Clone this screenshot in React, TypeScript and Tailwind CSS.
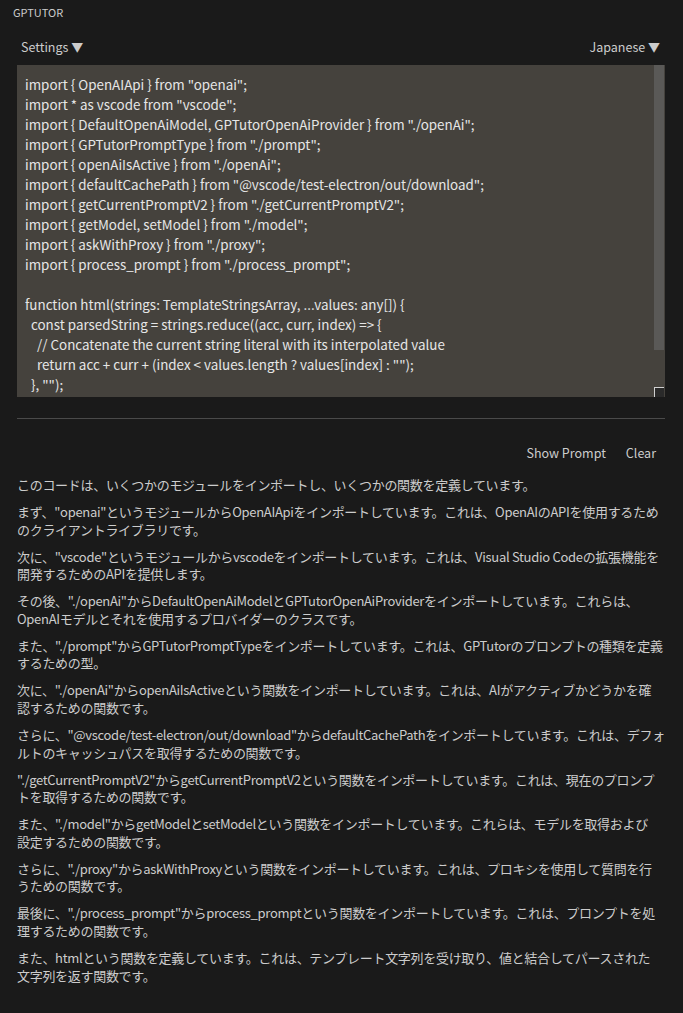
import React from "react";

const CODE = `import { OpenAIApi } from "openai";
import * as vscode from "vscode";
import { DefaultOpenAiModel, GPTutorOpenAiProvider } from "./openAi";
import { GPTutorPromptType } from "./prompt";
import { openAiIsActive } from "./openAi";
import { defaultCachePath } from "@vscode/test-electron/out/download";
import { getCurrentPromptV2 } from "./getCurrentPromptV2";
import { getModel, setModel } from "./model";
import { askWithProxy } from "./proxy";
import { process_prompt } from "./process_prompt";

function html(strings: TemplateStringsArray, ...values: any[]) {
  const parsedString = strings.reduce((acc, curr, index) => {
    // Concatenate the current string literal with its interpolated value
    return acc + curr + (index < values.length ? values[index] : "");
  }, "");`;

// 改行位置はパネル幅に合わせて固定
const PARAGRAPHS: string[][] = [
  ["このコードは、いくつかのモジュールをインポートし、いくつかの関数を定義しています。"],
  [
    "まず、\"openai\"というモジュールからOpenAIApiをインポートしています。これは、OpenAIのAPIを使用するため",
    "のクライアントライブラリです。",
  ],
  [
    "次に、\"vscode\"というモジュールからvscodeをインポートしています。これは、Visual Studio Codeの拡張機能を",
    "開発するためのAPIを提供します。",
  ],
  [
    "その後、\"./openAi\"からDefaultOpenAiModelとGPTutorOpenAiProviderをインポートしています。これらは、",
    "OpenAIモデルとそれを使用するプロバイダーのクラスです。",
  ],
  [
    "また、\"./prompt\"からGPTutorPromptTypeをインポートしています。これは、GPTutorのプロンプトの種類を定義",
    "するための型。",
  ],
  [
    "次に、\"./openAi\"からopenAiIsActiveという関数をインポートしています。これは、AIがアクティブかどうかを確",
    "認するための関数です。",
  ],
  [
    "さらに、\"@vscode/test-electron/out/download\"からdefaultCachePathをインポートしています。これは、デフォ",
    "ルトのキャッシュパスを取得するための関数です。",
  ],
  [
    "\"./getCurrentPromptV2\"からgetCurrentPromptV2という関数をインポートしています。これは、現在のプロンプ",
    "トを取得するための関数です。",
  ],
  [
    "また、\"./model\"からgetModelとsetModelという関数をインポートしています。これらは、モデルを取得および",
    "設定するための関数です。",
  ],
  [
    "さらに、\"./proxy\"からaskWithProxyという関数をインポートしています。これは、プロキシを使用して質問を行",
    "うための関数です。",
  ],
  [
    "最後に、\"./process_prompt\"からprocess_promptという関数をインポートしています。これは、プロンプトを処",
    "理するための関数です。",
  ],
  [
    "また、htmlという関数を定義しています。これは、テンプレート文字列を受け取り、値と結合してパースされた",
    "文字列を返す関数です。",
  ],
];

export default function App() {
  return (
    <div
      className="min-h-[1013px] w-full bg-[#1a1a1a] text-[#cccccc]"
      style={{ fontFamily: '"Noto Sans CJK JP", "Noto Sans", sans-serif' }}
    >
      {/* title */}
      <div className="px-[13px] pt-[4px] text-[11px] leading-[16px] text-[#cccccc]">GPTUTOR</div>

      {/* dropdowns */}
      <div className="mt-[19px] flex items-center justify-between pl-[21px] pr-[23px] text-[12.5px] leading-[16px]">
        <span>
          Settings <span className="text-[12px]">▼</span>
        </span>
        <span>
          Japanese <span className="text-[12px]">▼</span>
        </span>
      </div>

      {/* code box */}
      <div className="mx-[17px] mt-[10px]">
        <div className="relative h-[332px] w-[648px] overflow-hidden bg-[#45423d]">
          <pre
            className="whitespace-pre pl-[8px] pt-[9px] text-[13.4px] leading-[20px] text-[#e6e6e6]"
            style={{ fontFamily: '"Noto Sans CJK JP", "Noto Sans", sans-serif' }}
          >
            {CODE}
          </pre>
          <div className="absolute right-[1px] top-0 h-[285px] w-[10px] bg-[#5a5957]" />
          <div className="absolute bottom-0 right-[1px] h-[10px] w-[10px] border-l border-t border-[#d0d0d0] bg-[#2a2a2a]" />
        </div>
      </div>

      {/* divider */}
      <div className="mx-[17px] mt-[21px] h-px w-[648px] bg-[#4a4a4a]" />

      {/* actions */}
      <div className="mt-[26px] flex justify-end gap-[20px] pr-[27px] text-[12.5px] leading-[16px]">
        <span>Show Prompt</span>
        <span>Clear</span>
      </div>

      {/* answer */}
      <div className="mt-[15px] flex w-[666px] flex-col gap-[9.6px] pl-[17px] text-[13px] leading-[17.5px] tracking-[-0.3px]">
        {PARAGRAPHS.map((lines, i) => (
          <p key={i} className="whitespace-nowrap">
            {lines.map((l, j) => (
              <React.Fragment key={j}>
                {j > 0 && <br />}
                {l}
              </React.Fragment>
            ))}
          </p>
        ))}
      </div>
    </div>
  );
}
